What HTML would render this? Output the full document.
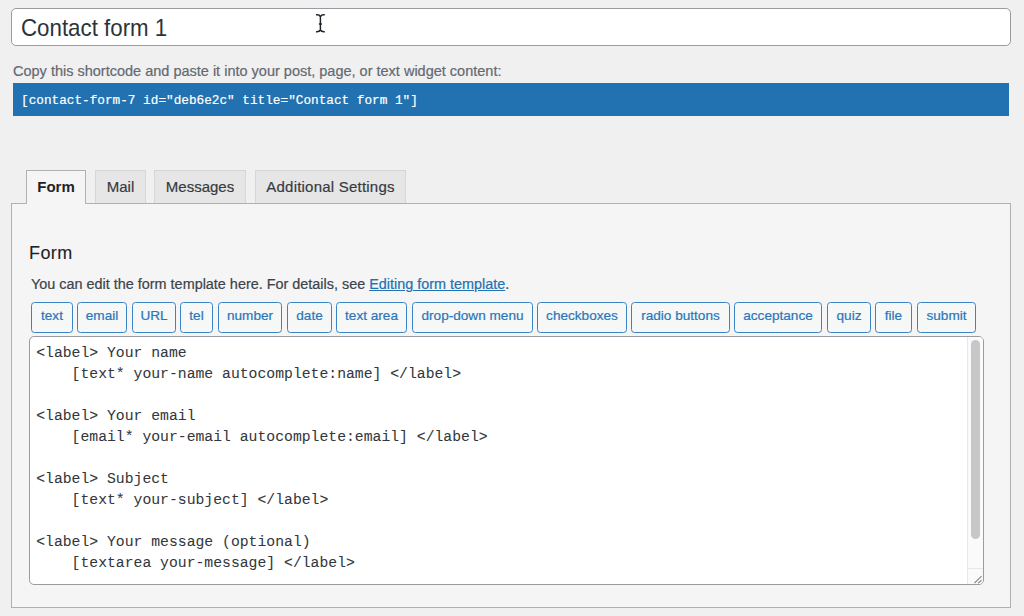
<!DOCTYPE html>
<html><head><meta charset="utf-8">
<style>
*{box-sizing:border-box;margin:0;padding:0}
html,body{width:1024px;height:616px;overflow:hidden;background:#f0f0f1;font-family:"Liberation Sans",sans-serif;color:#1d2327}
body{-webkit-text-stroke:0.2px currentColor}
.abs{position:absolute}
#title{left:11px;top:8px;width:1000px;height:38px;background:#fff;border:1px solid #989ba0;border-radius:5px}
#title span{position:absolute;left:9px;top:5px;font-size:24px;line-height:28px;transform:scaleX(0.929);transform-origin:0 0;color:#2c3338;-webkit-text-stroke:0;white-space:nowrap}
#ibeam{left:315px;top:13px;width:11px;height:20px}
#copy{left:13px;top:63px;font-size:14.5px;line-height:17px;color:#646970;white-space:nowrap}
#sc{left:13px;top:83px;width:996px;height:33px;background:#2271b1}
#sc span{position:absolute;left:8px;top:9px;font-family:"Liberation Mono",monospace;font-size:12.72px;line-height:17px;color:#fff;white-space:pre}
#panel{left:11px;top:203px;width:1000px;height:405px;background:#f5f5f5;border:1px solid #b0b0b0;border-top:none}
#tabline{left:11px;top:203px;width:1000px;height:1px;background:#b0b0b0;z-index:1}
.tab{position:absolute;top:170px;height:33px;background:#e6e6e6;border:1px solid #d6d6d6;border-bottom:none;font-size:15px;line-height:32px;color:#363b40;text-align:center;white-space:nowrap}
.tab.active{background:#f5f5f5;border-color:#b0b0b0;height:34px;font-weight:bold;color:#1d2327;z-index:2;-webkit-text-stroke:0;line-height:32px}
#h2{left:29px;top:242px;font-size:18px;line-height:22px;color:#1d2327;letter-spacing:0.4px;-webkit-text-stroke:0.1px currentColor;white-space:nowrap}
#desc{left:31px;top:276px;font-size:14.42px;line-height:17px;color:#3c434a;white-space:nowrap}
#desc a{color:#2271b1;text-decoration:underline}
.btn{position:absolute;top:302px;height:31px;border:1px solid #3a84c5;border-radius:3.5px;background:#f6f7f7;color:#2a76b8;font-size:13.6px;line-height:26.6px;text-align:center;white-space:nowrap}
#ta{left:29px;top:336px;width:955px;height:249px;background:#fff;border:1px solid #989ba0;border-radius:5px;overflow:hidden}
#ta pre{position:absolute;left:6.2px;top:5.5px;-webkit-text-stroke:0.05px currentColor;font-family:"Liberation Mono",monospace;font-size:14.75px;line-height:21px;color:#32373c}
#track{position:absolute;right:0;top:0;width:16px;height:232px;background:#fafafa;border-left:1px solid #e8e8e8}
#thumb{position:absolute;right:3px;top:3px;width:9px;height:199px;border-radius:5px;background:#c6c7c9}
#corner{position:absolute;right:0;bottom:0;width:16px;height:16px;background:#fafafa;border-left:1px solid #e8e8e8;border-top:1px solid #e8e8e8}
</style></head><body>
<div id="title" class="abs"><span>Contact form 1</span></div>
<svg id="ibeam" class="abs" viewBox="0 0 11 20"><path d="M1 1.8 Q4.4 1.4 5.4 3.6 Q6.4 1.4 9.8 1.8 M5.4 3.6 V16.9 M1 18.7 Q4.4 19.1 5.4 16.9 Q6.4 19.1 9.8 18.7 M3.9 10.9 H6.9" fill="none" stroke="#1d2327" stroke-width="1.45"/></svg>
<div id="copy" class="abs">Copy this shortcode and paste it into your post, page, or text widget content:</div>
<div id="sc" class="abs"><span>[contact-form-7 id="deb6e2c" title="Contact form 1"]</span></div>

<div id="panel" class="abs"></div>
<div id="tabline" class="abs"></div>
<div class="tab active" style="left:26px;width:60px">Form</div>
<div class="tab" style="left:95px;width:51px">Mail</div>
<div class="tab" style="left:154px;width:92px">Messages</div>
<div class="tab" style="left:255px;width:151px;letter-spacing:0.22px">Additional Settings</div>

<div id="h2" class="abs">Form</div>
<div id="desc" class="abs">You can edit the form template here. For details, see <a>Editing form template</a>.</div>

<div class="btn" style="left:31px;width:42px">text</div>
<div class="btn" style="left:77px;width:50px">email</div>
<div class="btn" style="left:132px;width:44px">URL</div>
<div class="btn" style="left:180px;width:33px">tel</div>
<div class="btn" style="left:218px;width:64px">number</div>
<div class="btn" style="left:287px;width:45px">date</div>
<div class="btn" style="left:336px;width:71px">text area</div>
<div class="btn" style="left:412px;width:121px">drop-down menu</div>
<div class="btn" style="left:537px;width:90px">checkboxes</div>
<div class="btn" style="left:631px;width:99px">radio buttons</div>
<div class="btn" style="left:734px;width:88px">acceptance</div>
<div class="btn" style="left:827px;width:44px">quiz</div>
<div class="btn" style="left:875px;width:37px">file</div>
<div class="btn" style="left:917px;width:59px">submit</div>

<div id="ta" class="abs">
<pre>&lt;label&gt; Your name
    [text* your-name autocomplete:name] &lt;/label&gt;

&lt;label&gt; Your email
    [email* your-email autocomplete:email] &lt;/label&gt;

&lt;label&gt; Subject
    [text* your-subject] &lt;/label&gt;

&lt;label&gt; Your message (optional)
    [textarea your-message] &lt;/label&gt;</pre>
<div id="track"><div id="thumb"></div></div>
<div id="corner"><svg width="16" height="16" viewBox="0 0 16 16" style="position:absolute;left:0;top:0"><path d="M6.5 14 L13.6 7.1 M10 14.2 L13.6 11.2" stroke="#8c8f94" stroke-width="1.2" fill="none"/></svg></div>
</div>
</body></html>
